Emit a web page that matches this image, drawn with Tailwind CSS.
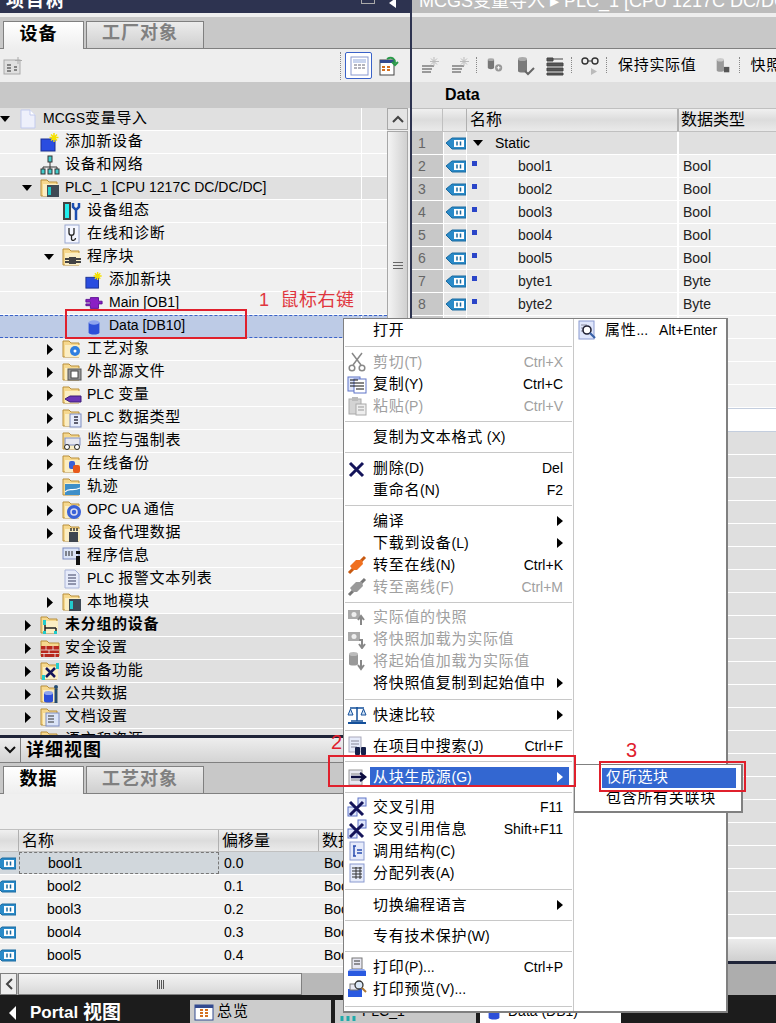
<!DOCTYPE html>
<html lang="zh-CN">
<head>
<meta charset="UTF-8">
<title>项目树</title>
<script src="https://cdn.jsdelivr.net/npm/@tailwindcss/browser@4"></script>
</head>
<body class="w-[776px] h-[1023px] overflow-hidden relative bg-[#1c1c1c] text-[14px] text-black font-['Liberation_Sans','Noto_Sans_CJK_SC',sans-serif]">

<div class="flex h-[995px]">
  <!-- left: project tree + detail view -->
  <div class="w-[410px] h-[995px] flex flex-col overflow-hidden bg-[#f0f0f0]">
    <div class="h-[13px] bg-[#2d3350] overflow-hidden flex justify-between pr-[14px]">
      <span class="text-white font-bold text-[18px] leading-[18px] -mt-[8px] pl-[6px] tracking-[2px]">项目树</span>
      <span class="flex gap-[14px] items-start">
        <span class="w-[14px] h-[4px] border border-[#aaa] border-t-0 mt-0"></span>
        <span class="w-0 h-0 border-y-[5px] border-y-transparent border-r-[7px] border-r-white -mt-[2px]"></span>
      </span>
    </div>
    <div class="h-[4px] bg-[#eeeeee]"></div>
    <div class="h-[32px] bg-[#c8c8c8] flex items-end pl-[3px] gap-[2px] border-b border-[#808080]">
      <div class="w-[81px] h-[28px] -mb-px bg-gradient-to-b from-white to-[#eeeeee] border border-b-0 border-[#808080] flex items-center justify-center font-bold text-[18px] tracking-[1px] pr-[10px] pb-[3px]">设备</div>
      <div class="w-[118px] h-[27px] bg-gradient-to-b from-[#ececec] to-[#cfcfcf] border border-b-0 border-[#808080] flex items-center justify-center font-bold text-[18px] tracking-[1px] text-[#808080] pr-[10px] pb-[3px]">工厂对象</div>
    </div>
    <div class="h-[33px] bg-[#eeeeee] flex items-center pl-[3px] pr-[11px]" id="leftbar"></div>
    <div class="h-[26px] bg-[#c8c8c8]"></div>
    <div class="flex h-[627px] overflow-hidden">
      <div class="w-[387px]" id="tree"></div>
      <div class="w-[23px] pl-[0px] pr-[2px] bg-[#f0f0f0] flex flex-col">
        <div class="h-[22px] border border-[#a8a8a8] bg-[#e4e4e4] flex items-center justify-center">
          <svg width="12" height="8" viewBox="0 0 12 8"><path d="M1 7l5-5 5 5" fill="none" stroke="#444" stroke-width="2"/></svg>
        </div>
        <div class="flex-1 mt-[1px] border border-[#a8a8a8] bg-gradient-to-r from-[#f4f4f4] to-[#d0d0d0] flex flex-col gap-[2px] pt-[130px] items-center">
          <span class="w-[10px] h-px bg-[#666]"></span><span class="w-[10px] h-px bg-[#666]"></span><span class="w-[10px] h-px bg-[#666]"></span>
        </div>
      </div>
    </div>
    <div class="h-[3px] bg-[#1f2438]"></div>
    <div class="h-[25px] flex items-center bg-gradient-to-b from-[#eeeeee] to-[#d4d4d4] border-b border-[#808080]">
      <div class="w-[21px] h-full border-r border-[#808080] flex items-center justify-center">
        <svg width="12" height="8" viewBox="0 0 12 8"><path d="M1 1l5 5 5-5" fill="none" stroke="#111" stroke-width="2"/></svg>
      </div>
      <span class="pl-[5px] font-bold text-[18px] tracking-[1px]">详细视图</span>
    </div>
    <div class="h-[31px] bg-[#c8c8c8] flex items-end pl-[3px] gap-[2px] border-b border-[#808080]">
      <div class="w-[81px] h-[28px] -mb-px bg-gradient-to-b from-white to-[#eeeeee] border border-b-0 border-[#808080] flex items-center justify-center font-bold text-[18px] tracking-[1px] pr-[10px] pb-[2px]">数据</div>
      <div class="w-[118px] h-[27px] bg-gradient-to-b from-[#ececec] to-[#cfcfcf] border border-b-0 border-[#808080] flex items-center justify-center font-bold text-[18px] tracking-[1px] text-[#808080] pr-[10px] pb-[2px]">工艺对象</div>
    </div>
    <div class="h-[35px] bg-[#f0f0f0]"></div>
    <div class="h-[23px] flex bg-gradient-to-b from-[#f0f0f0] via-[#dcdcdc] to-[#eaeaea] border-y border-[#c0c0c0] text-[16px]">
      <div class="w-[19px] border-r border-[#b0b0b0]"></div>
      <div class="w-[200px] border-r border-[#b0b0b0] pl-[3px] flex items-center">名称</div>
      <div class="w-[100px] border-r border-[#b0b0b0] pl-[3px] flex items-center">偏移量</div>
      <div class="flex-1 pl-[3px] flex items-center">数据类型</div>
    </div>
    <div id="detail" class="h-[121px]"></div>
    <div class="h-[22px] flex bg-[#b8b8b8]">
      <div class="w-[17px] border border-[#808080] bg-[#eeeeee] flex items-center justify-center">
        <svg width="8" height="12" viewBox="0 0 8 12"><path d="M7 1L2 6l5 5" fill="none" stroke="#444" stroke-width="2"/></svg>
      </div>
      <div class="w-[284px] ml-px border border-[#808080] bg-gradient-to-b from-[#f4f4f4] to-[#d8d8d8] flex items-center justify-center gap-px">
        <span class="w-px h-[9px] bg-[#555]"></span><span class="w-px h-[9px] bg-[#555]"></span><span class="w-px h-[9px] bg-[#555]"></span><span class="w-px h-[9px] bg-[#555]"></span>
      </div>
    </div>
  </div>

  <div class="w-[2px] bg-[#2d3350]"></div>

  <!-- right: block editor -->
  <div class="w-[364px] h-[995px] flex flex-col overflow-hidden bg-[#dfdfdf]">
    <div class="h-[13px] bg-[#bcbcbc] overflow-hidden">
      <div class="text-white text-[18px] leading-[18px] -mt-[8px] pl-[7px] whitespace-nowrap">MCGS变量导入 ▸ PLC_1 [CPU 1217C DC/DC/DC</div>
    </div>
    <div class="h-[4px] bg-[#eeeeee]"></div>
    <div class="h-[32px] bg-[#c8c8c8] border-b border-[#808080]"></div>
    <div class="h-[33px] bg-[#eeeeee] flex items-center pl-[8px] whitespace-nowrap" id="rightbar"></div>
    <div class="h-[26px] bg-[#dfdfdf] flex items-center pl-[33px] font-bold text-[16px]">Data</div>
    <div class="h-[24px] flex bg-gradient-to-b from-[#f0f0f0] via-[#dcdcdc] to-[#eaeaea] border-y border-[#c0c0c0] text-[16px]">
      <div class="w-[21px] border-r border-[#c0c0c0] ml-[10px]"></div>
      <div class="w-[24px] border-r border-[#b0b0b0]"></div>
      <div class="w-[212px] border-r-2 border-[#b0b0b0] pl-[3px] flex items-center">名称</div>
      <div class="flex-1 pl-[2px] flex items-center">数据类型</div>
    </div>
    <div id="blocktable"></div>
    <div class="h-[24px] bg-white border-y border-[#c4cede]"></div>
    <div id="filler" class="h-[506px] overflow-hidden"></div>
    <div class="h-[23px] bg-gradient-to-b from-[#ececec] to-[#cfcfcf] border-t border-white"></div>
    <div class="h-[3px] bg-[#1f2438]"></div>
    <div class="h-[31px] bg-[#adadad]"></div>
  </div>
</div>

<!-- status bar -->
<div class="h-[28px] flex items-end">
  <div class="w-[190px] h-full flex items-center pl-[9px] pt-[8px] text-white font-bold text-[17px]">
    <span class="w-0 h-0 border-y-[7px] border-y-transparent border-r-[7px] border-r-white mr-[14px]"></span>Portal&nbsp;<span class="text-[19px]">视图</span>
  </div>
  <div class="w-[141px] h-[23px] bg-[#cccccc] flex items-center pl-[4px] gap-[3px] text-[15px]" id="tab1"></div>
  <div class="w-[141px] h-[23px] ml-[4px] bg-[#c8c8c8] flex items-center pl-[4px] gap-[3px] text-[14px]" id="tab2"></div>
  <div class="w-[141px] h-[23px] ml-[4px] bg-white flex items-center pl-[5px] gap-[5px] text-[14px]" id="tab3"></div>
</div>

<!-- context menu -->
<div class="absolute left-[343px] top-[318px] w-[385px] h-[695px] bg-white border-r-2 border-b-2 border-l border-t border-[#808080] flex">
  <div class="w-[230px] border-r border-[#c8c8c8]" id="menu"></div>
  <div class="flex-1 h-[22px] flex items-center pl-[3px]" id="props"></div>
</div>

<!-- submenu -->
<div class="absolute left-[574px] top-[764px] w-[169px] h-[49px] bg-white border border-[#808080] border-r-2 border-b-2 pt-[3px]">
  <div class="ml-[27px] mr-[5px] h-[20px] bg-[#3367d1] text-white pl-[4px] flex items-center text-[15px] tracking-[0.7px] pb-[1px]">仅所选块</div>
  <div class="pl-[31px] h-[21px] flex items-center text-[15px] tracking-[0.7px]">包含所有关联块</div>
</div>

<!-- red annotations -->
<div class="absolute left-[65px] top-[309px] w-[182px] h-[30px] border-2 border-[#e0202c]"></div>
<div class="absolute left-[259px] top-[289px] text-[#e0363e] text-[18px] tracking-[0.5px] leading-[22px] whitespace-nowrap">1&nbsp;&nbsp;鼠标右键</div>
<div class="absolute left-[328px] top-[755px] w-[248px] h-[32px] border-2 border-[#e0202c]"></div>
<div class="absolute left-[331px] top-[731px] text-[#e0202c] text-[20px] leading-[22px]">2</div>
<div class="absolute left-[626px] top-[739px] text-[#e0202c] text-[20px] leading-[22px]">3</div>
<div class="absolute left-[599px] top-[761px] w-[147px] h-[31px] border-2 border-[#e0202c]"></div>

<script>
function ic(body, size) {
  size = size || 20;
  return '<svg width="' + size + '" height="' + size + '" viewBox="0 0 20 20" class="shrink-0">' + body + '</svg>';
}
const fold = '<path d="M1 18V2h6l2 2h8v14z" fill="#f6d88e" stroke="#b98f3a"/><path d="M3 18V6h15v12z" fill="#fbeec4"/>';
const star = '<path d="M14 1v9M9.5 5.5h9M11 2.500l6 6M17 2.500l-6 6" stroke="#f5e100" stroke-width="1.500"/>';
const paper = '<path d="M3 1h10l4 4v14H3z" fill="#e6ebfa" stroke="#a9b4d8"/>';
const lines = '<path d="M6 6h8M6 9h8M6 12h8M6 15h8" stroke="#3a4060" stroke-width="1.200"/>';
const cyl = c => '<path d="M4 5v11c0 3 12 3 12 0V5z" fill="' + c + '"/><ellipse cx="10" cy="5" rx="6" ry="2.500" fill="#8ea4ee"/>';
const bigX = '<path d="M3 5l13 13M16 5L3 18" stroke="#14145a" stroke-width="3"/>';
const plug = (c, d) => '<path d="M2 18l4-4M18 2l-4 4" stroke="' + d + '" stroke-width="3"/><path d="M3 11l6-6 6 0 1 4-6 6-4 0z" fill="' + c + '"/>';
const icons = {
  doc: '<path d="M3 1h9l5 5v13H3z" fill="#eef0fb" stroke="#c3cbee"/><path d="M12 1v5h5" fill="#fff" stroke="#c3cbee"/>',
  add: '<rect x="1" y="7" width="14" height="12" fill="#2a4de0" stroke="#1a2f90"/>' + star,
  net: '<path d="M10 6v5M3 15v-3h14v3M10 11v4" stroke="#333" fill="none"/><rect x="8" y="1" width="4" height="6" fill="#4cc" stroke="#333"/><rect x="1" y="14" width="4" height="5" fill="#4cc" stroke="#333"/><rect x="8" y="14" width="4" height="5" fill="#4cc" stroke="#333"/><rect x="15" y="14" width="4" height="5" fill="#4cc" stroke="#333"/>',
  plc: fold + '<rect x="7" y="7" width="12" height="12" fill="#3f4a55"/><rect x="8" y="9" width="3" height="8" fill="#2cc"/>',
  cfg: '<rect x="1" y="1" width="8" height="18" fill="#444"/><rect x="3" y="3" width="4" height="14" fill="#2ee"/><path d="M11 2v4l3 3 3-3V2M14 9v10" fill="none" stroke="#1a4db0" stroke-width="2.500"/>',
  diag: '<rect x="3" y="1" width="14" height="18" fill="#f4f6ff" stroke="#9aa8d0"/><path d="M7 4v5c0 3 5 3 5 0V4M9.500 12v3c0 2 4 2 4-1" fill="none" stroke="#222" stroke-width="1.300"/>',
  blk: fold + '<rect x="7" y="10" width="7" height="7" fill="#444"/><path d="M3 12h16M3 15h16" stroke="#444" stroke-width="2"/>',
  main: '<path d="M1 6h5V4h9v4h4v3h-4v5H6v-3H1v-2h5V9H1z" fill="#8a1fc4" stroke="#5a1090"/>',
  db: cyl('#2d4fd8'),
  tech: fold + '<circle cx="13" cy="12" r="5" fill="#2f7fe0"/><circle cx="13" cy="12" r="1.500" fill="#fff"/>',
  ext: fold + '<rect x="6" y="7" width="13" height="11" fill="#999" stroke="#555"/><rect x="9" y="9" width="7" height="7" fill="#fff" stroke="#444"/>',
  tag: fold + '<path d="M3 14l5-3h11v6H8z" fill="#6a35b5" stroke="#3d1d78"/>',
  type: fold + '<rect x="8" y="6" width="11" height="13" fill="#e6ebfa" stroke="#7d8cc0"/><path d="M12 9h4M12 12h4M12 15h4" stroke="#334" stroke-width="1.500"/>',
  watch: fold + '<rect x="3" y="7" width="15" height="7" fill="#e8e8f0" stroke="#7d8cc0"/><circle cx="5" cy="16" r="2.500" fill="#fff" stroke="#222"/><circle cx="15" cy="16" r="2.500" fill="#fff" stroke="#222"/>',
  bak: fold + '<rect x="7" y="7" width="6" height="8" rx="2" fill="#3a62d8"/><rect x="11" y="11" width="7" height="8" rx="2" fill="#e8591a"/>',
  trace: fold + '<rect x="3" y="7" width="15" height="11" fill="#3f8fc8"/><path d="M3 15c4-5 7 0 15-4" fill="none" stroke="#fff" stroke-width="1.200"/>',
  opc: fold + '<circle cx="12" cy="12" r="7" fill="#3a62d8"/><circle cx="12" cy="12" r="3" fill="none" stroke="#dde" stroke-width="1.500"/>',
  proxy: fold + '<rect x="7" y="9" width="9" height="10" fill="#3f4650"/><path d="M9 5v3M12 5v3M15 5v3" stroke="#333" stroke-width="1.500"/>',
  info: '<rect x="1" y="2" width="16" height="11" fill="#dbe4f7" stroke="#7d8cc0"/><path d="M4 5v5M7 5v5M10 5v5" stroke="#222"/><rect x="14" y="5" width="4" height="3" fill="#111"/><rect x="14" y="10" width="4" height="9" fill="#111"/>',
  alarm: paper + lines,
  local: fold + '<rect x="7" y="7" width="12" height="12" fill="#3f4a55"/><rect x="8" y="9" width="3" height="8" fill="#2cc"/>',
  ungrp: fold + '<path d="M5 13h11M5 9v9M16 13v5" stroke="#222" stroke-width="1.500"/><rect x="3" y="5" width="3" height="5" fill="#2cc"/><rect x="3" y="16" width="3" height="3" fill="#2cc"/><rect x="14" y="16" width="3" height="3" fill="#2cc"/>',
  sec: '<path d="M1 18V3h6l2 2h10v13z" fill="#f6d88e" stroke="#b98f3a"/><rect x="1" y="8" width="18" height="11" fill="#b8281c"/><path d="M1 12h18M1 15.500h18M6 8v4M13 8v4M9 12v4M4 15v4M15 15v4" stroke="#eee" stroke-width=".8"/>',
  cross: fold + '<path d="M6 7l9 9M15 7l-9 9" stroke="#14145a" stroke-width="2.500"/><rect x="16" y="2" width="3" height="6" fill="#2cc"/><rect x="2" y="14" width="3" height="5" fill="#2cc"/>',
  common: fold + '<path d="M4 9v8c0 2 9 2 9 0V9z" fill="#2d4fd8"/><ellipse cx="8.500" cy="9" rx="4.500" ry="2" fill="#8ea4ee"/><path d="M16 5v14" stroke="#224a70" stroke-width="3"/><circle cx="16" cy="3" r="2" fill="#224a70"/>',
  docs: fold + '<rect x="6" y="6" width="13" height="13" fill="#dbe4f7" stroke="#7d8cc0"/><path d="M8 9h6M8 12h6M8 15h6" stroke="#333"/>',
  lang: fold,
  cut: '<path d="M5 1l9 12M15 1L6 13" stroke="#888" stroke-width="1.500"/><circle cx="5" cy="16" r="2.800" fill="none" stroke="#888" stroke-width="1.500"/><circle cx="15" cy="16" r="2.800" fill="none" stroke="#888" stroke-width="1.500"/>',
  copy: '<rect x="1" y="3" width="12" height="14" fill="#dfe6fb" stroke="#5f74c8"/><rect x="7" y="5" width="12" height="14" fill="#fff" stroke="#5f74c8"/><path d="M3 6h8M3 9h8M3 12h8M9 9h8M9 12h8M9 15h8" stroke="#111" stroke-width="1.200"/>',
  paste: '<rect x="2" y="3" width="12" height="15" fill="#d4d4d4" stroke="#aaa"/><rect x="5" y="1" width="6" height="4" fill="#bbb"/><rect x="9" y="8" width="10" height="11" fill="#eee" stroke="#aaa"/><path d="M11 11h6M11 14h6" stroke="#999"/>',
  del: bigX,
  online: plug('#f0701f', '#c85a10'),
  offline: plug('#9a9a9a', '#777'),
  snap1: '<rect x="1" y="3" width="12" height="9" fill="#aaa"/><circle cx="7" cy="7.500" r="2.500" fill="#eee"/><path d="M14 18v-8M11 13l3-4 3 4" fill="none" stroke="#888" stroke-width="2"/>',
  snap2: '<rect x="1" y="3" width="12" height="9" fill="#aaa"/><circle cx="7" cy="7.500" r="2.500" fill="#eee"/><path d="M12 11h3v7M12 15l3 4 3-4" fill="none" stroke="#888" stroke-width="2"/>',
  snap3: '<path d="M2 3v10c0 2 9 2 9 0V3z" fill="#999"/><ellipse cx="6.500" cy="3" rx="4.500" ry="2" fill="#bbb"/><path d="M14 9v9M11 14l3 4 3-4" fill="none" stroke="#888" stroke-width="2"/>',
  scale: '<path d="M10 2v14M3 3h14M4 16h12" stroke="#14509a" stroke-width="1.500"/><rect x="1" y="17" width="18" height="2" fill="#14509a"/><path d="M1 10l2.500-6L6 10zM14 10l2.500-6L19 10z" fill="#cfe0f5" stroke="#14509a"/>',
  find: '<rect x="2" y="1" width="12" height="15" fill="#e6ebfa" stroke="#aab"/><path d="M4 5h8M4 8h8M4 11h6" stroke="#889"/><rect x="8" y="11" width="5" height="8" rx="1" fill="#16204a"/><rect x="14" y="11" width="5" height="8" rx="1" fill="#16204a"/>',
  gen: '<rect x="2" y="3" width="13" height="15" fill="#e8e8f2" stroke="#999"/><path d="M4 7h8M4 10h6M4 13h8" stroke="#888"/><path d="M4 10h13M13 6l5 4-5 4" fill="none" stroke="#0c0c40" stroke-width="2.500"/>',
  xref: '<rect x="1" y="10" width="9" height="9" fill="#dfe6fb" stroke="#5f74c8"/><rect x="11" y="1" width="8" height="8" fill="#dfe6fb" stroke="#5f74c8"/>' + bigX,
  call: '<rect x="3" y="1" width="14" height="18" fill="#e6ebfa" stroke="#8a9ad0"/><path d="M6 5h3M10 9h5M10 12h5M6 15h3M7 5v10" stroke="#2a4db0" stroke-width="1.500" fill="none"/>',
  assign: '<rect x="3" y="1" width="14" height="18" fill="#e6ebfa" stroke="#8a9ad0"/><path d="M5 5h10M5 8h10M5 11h10M5 14h10M9 4v12M13 4v12" stroke="#333"/>',
  print: '<rect x="5" y="1" width="10" height="11" fill="#e8e8f2" stroke="#777"/><path d="M7 4h6M7 7h6" stroke="#333"/><path d="M1 14h18v5H1z" fill="#2a5ae0"/><path d="M3 12h14l2 2H1z" fill="#8aa4ee"/>',
  preview: '<rect x="1" y="10" width="14" height="8" fill="#2a5ae0"/><rect x="3" y="5" width="8" height="6" fill="#e8e8f2" stroke="#777"/><circle cx="12" cy="6" r="4" fill="#dbe8f7" stroke="#333" stroke-width="1.300"/><path d="M15 9l4 4" stroke="#b07830" stroke-width="2"/>',
  prop: '<rect x="2" y="1" width="15" height="18" fill="#dfe6fb" stroke="#8a9ad0"/><path d="M4 5h6M4 8h4M4 11h4" stroke="#889"/><circle cx="10" cy="10" r="4" fill="#fff" stroke="#223" stroke-width="1.600"/><path d="M13 13l5 5" stroke="#3a62a8" stroke-width="2.200"/>',
  grid: '<rect x="1" y="3" width="18" height="15" fill="#fff" stroke="#334a90"/><rect x="1" y="3" width="18" height="3" fill="#334a90"/><path d="M6 8h3M11 8h3M6 11h3M11 11h3M6 14h3M11 14h3" stroke="#d47020" stroke-width="1.800"/>',
  tagb: '<path d="M0 10l6-5h14v11H6z" fill="#2a8ac8" stroke="#1a6aa0"/><rect x="8" y="7" width="10" height="7" fill="#fff"/><path d="M11 8.500v4M14.500 8.500v4" stroke="#1a6aa0" stroke-width="1.500"/>',
  tbIcon1: '<rect x="1" y="4" width="16" height="14" fill="#e0e0e0" stroke="#aaa"/><path d="M4 9h4M4 12h4M4 15h4M11 11h3M11 14h3" stroke="#666" stroke-width="1.500"/><path d="M15 1v7M12 4.500h7" stroke="#aaa"/>',
  tbList: '<rect x="2" y="1" width="17" height="18" fill="#fff" stroke="#8a9ad0"/><rect x="4" y="3" width="13" height="4" fill="#c8d4ee"/><path d="M5 9h3M9 9h3M13 9h3M5 12h3M9 12h3M13 12h3" stroke="#667"/>',
  tbImp: '<rect x="1" y="4" width="14" height="15" fill="#fff" stroke="#444"/><rect x="1" y="4" width="14" height="3" fill="#334a90"/><path d="M3 11h3M8 11h3M3 14h3M8 14h3" stroke="#d47020" stroke-width="1.800"/><path d="M8 3c5-3 8 0 8 4M13 6l3 3 3-3" fill="none" stroke="#2a9a4a" stroke-width="2"/>',
  sn: '<path d="M2 10h12M2 13h10M2 16h9" stroke="#999" stroke-width="2"/><path d="M14 1v9M10 5.500h9M11 2.500l6 6M17 2.500l-6 6" stroke="#bbb"/>',
  dbSt: '<path d="M2 3v9c0 2 7 2 7 0V3z" fill="#777"/><ellipse cx="5.500" cy="3" rx="3.500" ry="1.500" fill="#aaa"/><circle cx="14" cy="12" r="4" fill="#999"/><path d="M14 10v4M12 12h4" stroke="#fff"/>',
  dbCk: '<path d="M3 3v12c0 2 9 2 9 0V3z" fill="#7a7a7a"/><ellipse cx="7.500" cy="3" rx="4.500" ry="2" fill="#aaa"/><path d="M10 15l3 3 6-6" fill="none" stroke="#666" stroke-width="2"/>',
  rows: '<path d="M2 2h6v3H2zM2 7h16v3H2zM2 12h16v3H2zM2 17h16v2H2zM8 3h10" stroke="#444" fill="#555"/>',
  glasses: '<circle cx="5" cy="5" r="3" fill="none" stroke="#333" stroke-width="1.400"/><circle cx="15" cy="5" r="3" fill="none" stroke="#333" stroke-width="1.400"/><path d="M8 5h4" stroke="#333"/><path d="M11 12v7l6-3.500z" fill="#bbb"/>',
  dbLock: '<path d="M3 3v12c0 2 8 2 8 0V3z" fill="#999"/><ellipse cx="7" cy="3" rx="4" ry="2" fill="#ccc"/><rect x="11" y="11" width="6" height="6" fill="#555"/>',
  plcTab: '<path d="M3 14v5M9 14v5M15 14v5" stroke="#2aa" stroke-width="3"/>'
};

// project tree: [indent, arrow, icon, label, dark?, bold?]
const treeRows = [
  [0,'d','doc','MCGS变量导入',1],
  [1,'','add','添加新设备'],
  [1,'','net','设备和网络'],
  [1,'d','plc','PLC_1 [CPU 1217C DC/DC/DC]',1],
  [2,'','cfg','设备组态'],
  [2,'','diag','在线和诊断'],
  [2,'d','blk','程序块'],
  [3,'','add','添加新块'],
  [3,'','main','Main [OB1]'],
  [3,'','db','Data [DB10]',2],
  [2,'r','tech','工艺对象'],
  [2,'r','ext','外部源文件'],
  [2,'r','tag','PLC 变量'],
  [2,'r','type','PLC 数据类型'],
  [2,'r','watch','监控与强制表'],
  [2,'r','bak','在线备份'],
  [2,'r','trace','轨迹'],
  [2,'r','opc','OPC UA 通信'],
  [2,'r','proxy','设备代理数据'],
  [2,'','info','程序信息'],
  [2,'','alarm','PLC 报警文本列表'],
  [2,'r','local','本地模块'],
  [1,'r','ungrp','未分组的设备',1,1],
  [1,'r','sec','安全设置',1],
  [1,'r','cross','跨设备功能',1],
  [1,'r','common','公共数据',1],
  [1,'r','docs','文档设置',1],
  [1,'r','lang','语言和资源',1]
];
const indentCls = ['pl-0','pl-[22px]','pl-[44px]','pl-[66px]'];
const arrows = {
  d: '<svg width="10" height="6" viewBox="0 0 10 6"><path d="M0 0h10L5 6z" fill="#000"/></svg>',
  r: '<svg width="6" height="11" viewBox="0 0 6 11" class="ml-[3px]"><path d="M0 0l6 5.500L0 11z" fill="#000"/></svg>',
  '': ''
};
const spaced = t => t.replace(/[\u4e00-\u9fff]+/g, m => '<span class="text-[15px] tracking-[0.7px]">' + m + '</span>');

document.getElementById('tree').innerHTML = treeRows.map(r => {
  const sel = r[4] === 2;
  const bg = sel ? 'bg-[#bdcbe6] border-y border-dashed border-[#3a62c8]' : (r[4] ? 'bg-[#e0e0e0] border-b border-white' : 'bg-[#f0f0f0] border-b border-white');
  return '<div class="h-[23px] flex ' + bg + '"><div class="w-[362px] flex items-center border-r border-white whitespace-nowrap ' + indentCls[r[0]] + (r[5] ? ' font-bold' : '') + '">' +
    '<span class="w-[18px] shrink-0 flex items-center">' + arrows[r[1]] + '</span>' +
    '<span class="w-[20px] mr-[5px] shrink-0 flex justify-center">' + ic(icons[r[2]], r[0] === 3 ? 18 : 20) + '</span>' +
    '<span class="pb-[2px]">' + spaced(r[3]) + '</span></div></div>';
}).join('');

// block table rows on the right
const vars = [['bool1','Bool'],['bool2','Bool'],['bool3','Bool'],['bool4','Bool'],['bool5','Bool'],['byte1','Byte'],['byte2','Byte'],['',''],['',''],['',''],['','']];
let tableHtml = '<div class="h-[23px] flex border-b border-white bg-[#e0e0e0]"><div class="w-[31px] bg-[#c8c8c8] pl-[6px] text-[#666] flex items-center">1</div><div class="w-[24px] bg-[#e6e6e6] flex items-center pl-[2px] border-x border-white">' + ic(icons.tagb, 20) + '</div><div class="w-[212px] flex items-center pl-[6px] border-r-2 border-white"><svg width="10" height="6" viewBox="0 0 10 6"><path d="M0 0h10L5 6z" fill="#000"/></svg><span class="pl-[12px]">Static</span></div><div class="flex-1"></div></div>';
vars.forEach((v, i) => {
  tableHtml += '<div class="h-[23px] flex border-b border-white bg-[#f0f0f0]"><div class="w-[31px] bg-[#c8c8c8] pl-[6px] text-[#666] flex items-center">' + (i + 2) + '</div>' +
    '<div class="w-[24px] bg-[#e6e6e6] flex items-center pl-[2px] border-x border-white">' + ic(icons.tagb, 20) + '</div>' +
    '<div class="w-[212px] flex border-r-2 border-white"><div class="w-[22px] bg-[#e8e8e8] pl-[5px] pt-[6px]"><div class="w-[5px] h-[5px] bg-[#2a45c8]"></div></div><div class="pl-[29px] flex items-center text-[#222]">' + v[0] + '</div></div>' +
    '<div class="flex-1 pl-[4px] flex items-center text-[#222]">' + v[1] + '</div></div>';
});
document.getElementById('blocktable').innerHTML = tableHtml;

let fillerHtml = '';
for (let i = 0; i < 22; i++) fillerHtml += '<div class="h-[23px] border-b border-white bg-[#dfdfdf]"></div>';
document.getElementById('filler').innerHTML = fillerHtml;

// detail view rows
document.getElementById('detail').innerHTML = [['bool1','0.0'],['bool2','0.1'],['bool3','0.2'],['bool4','0.3'],['bool5','0.4']].map((v, i) => {
  const on = i === 0;
  return '<div class="h-[23px] flex border-b border-white ' + (on ? 'bg-[#d1d7dc]' : 'bg-[#f0f0f0]') + '">' +
    '<div class="w-[19px] overflow-hidden flex items-center"><span class="-ml-[4px] flex">' + ic(icons.tagb, 20) + '</span></div>' +
    '<div class="w-[200px] pl-[28px] flex items-center ' + (on ? 'border border-dashed border-[#777]' : '') + '">' + v[0] + '</div>' +
    '<div class="w-[100px] pl-[5px] flex items-center">' + v[1] + '</div><div class="flex-1 pl-[5px] flex items-center">Bool</div></div>';
}).join('');

// toolbars
const dotted = '<span class="w-0 h-[28px] border-l border-dotted border-[#888]"></span>';
document.getElementById('leftbar').innerHTML =
  ic(icons.tbIcon1, 20) + '<span class="flex-1"></span>' + dotted +
  '<span class="ml-[4px] w-[27px] h-[27px] border border-[#3a62c8] rounded-[2px] bg-white flex items-center justify-center">' + ic(icons.tbList, 20) + '</span>' +
  '<span class="ml-[7px]">' + ic(icons.tbImp, 20) + '</span>';
document.getElementById('rightbar').innerHTML =
  ic(icons.sn, 20) + '<span class="ml-[10px]">' + ic(icons.sn, 20) + '</span><span class="ml-[6px]">' + dotted + '</span>' +
  '<span class="ml-[9px]">' + ic(icons.dbSt, 18) + '</span><span class="ml-[11px]">' + ic(icons.dbCk, 20) + '</span><span class="ml-[10px]">' + ic(icons.rows, 20) + '</span><span class="ml-[6px]">' + dotted + '</span>' +
  '<span class="ml-[8px]">' + ic(icons.glasses, 20) + '</span><span class="ml-[6px]">' + dotted + '</span>' +
  '<span class="ml-[11px] text-[15px] tracking-[0.7px]">保持实际值</span><span class="ml-[17px]">' + ic(icons.dbLock, 18) + '</span><span class="ml-[7px]">' + dotted + '</span><span class="ml-[11px] text-[15px] tracking-[0.7px]">快照</span>';

// status bar tabs
document.getElementById('tab1').innerHTML = ic(icons.grid, 20) + '<span class="tracking-[1px]">总览</span>';
document.getElementById('tab2').innerHTML = ic(icons.plcTab, 20) + '<span>PLC_1</span>';
document.getElementById('tab3').innerHTML = ic(icons.db, 18) + '<span>Data (DB1)</span>';

// context menu: separator is a number (block height)
const menu = [
  ['打开'], 10,
  ['剪切(T)','Ctrl+X','cut',1], ['复制(Y)','Ctrl+C','copy'], ['粘贴(P)','Ctrl+V','paste',1], 9,
  ['复制为文本格式 (X)'], 9,
  ['删除(D)','Del','del'], ['重命名(N)','F2'], 9,
  ['编译','>'], ['下载到设备(L)','>'], ['转至在线(N)','Ctrl+K','online'], ['转至离线(F)','Ctrl+M','offline',1], 8,
  ['实际值的快照','','snap1',1], ['将快照加载为实际值','','snap2',1], ['将起始值加载为实际值','','snap3',1], ['将快照值复制到起始值中','>'], 10,
  ['快速比较','>','scale'], 9,
  ['在项目中搜索(J)','Ctrl+F','find'], 9,
  ['从块生成源(G)','>','gen',0,1], 8,
  ['交叉引用','F11','xref'], ['交叉引用信息','Shift+F11','xref'], ['调用结构(C)','','call'], ['分配列表(A)','','assign'], 10,
  ['切换编程语言','>'], 9,
  ['专有技术保护(W)'], 9,
  ['打印(P)...','Ctrl+P','print'], ['打印预览(V)...','','preview'], 12
];
const sepCls = {8:'h-[8px]',9:'h-[9px]',10:'h-[10px]',12:'h-[12px]'};
document.getElementById('menu').innerHTML = menu.map(m => {
  if (typeof m === 'number') return '<div class="' + sepCls[m] + ' flex items-center px-px"><div class="w-full h-px bg-[#c8c8c8]"></div></div>';
  const [label, right, icon, off, hot] = m;
  const color = hot ? 'bg-[#3367d1] text-white' : (off ? 'text-[#a0a0a0]' : '');
  const arrow = '<svg width="6" height="10" viewBox="0 0 6 10"><path d="M0 0l6 5-6 5z" fill="' + (hot ? '#fff' : '#000') + '"/></svg>';
  return '<div class="h-[22px] flex items-center"><span class="w-[26px] pl-[3px] shrink-0 flex">' + (icon ? ic(icons[icon], 20) : '') + '</span>' +
    '<div class="flex-1 h-[20px] mr-[4px] pl-[3px] pr-[6px] flex items-center justify-between whitespace-nowrap ' + color + '"><span>' + spaced(label) + '</span>' + (right === '>' ? arrow : '<span>' + (right || '') + '</span>') + '</div></div>';
}).join('');
document.getElementById('props').innerHTML = ic(icons.prop, 20) + '<span class="ml-[8px] text-[15px] tracking-[0.7px]">属性</span><span class="mr-[11px]">...</span><span>Alt+Enter</span>';
</script>
</body>
</html>
